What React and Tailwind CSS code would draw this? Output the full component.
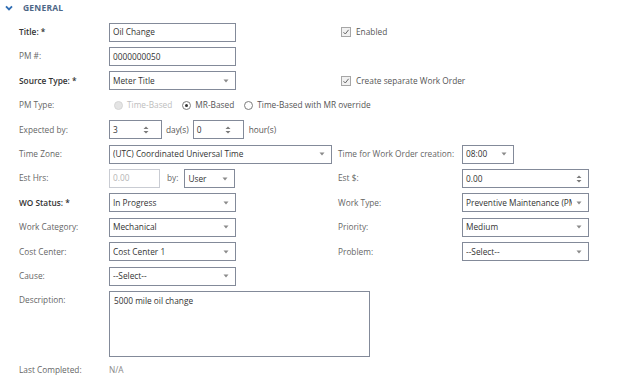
import React from 'react'

function Arrow() {
  return (
    <svg width="6" height="4" viewBox="0 0 6 4" className="shrink-0">
      <path d="M0.5 0.5h5L3 3.5z" fill="#8a8a8a" />
    </svg>
  )
}

function SpinIcon() {
  return (
    <svg width="6" height="8" viewBox="0 0 6 8" className="shrink-0">
      <path d="M3 0.5L5.5 3H0.5z M3 7.5L5.5 5H0.5z" fill="#7a7a7a" />
    </svg>
  )
}

const boxBase = 'h-[19px] border border-[#838a99] bg-white flex items-center pl-[3px] text-[#333]'

function Input({ value, className = 'w-[127px]' }) {
  return (
    <div className={`${className} ${boxBase}`}>
      <span className="whitespace-nowrap leading-[12px]">{value}</span>
    </div>
  )
}

function Select({ value, className = 'w-[127px]' }) {
  return (
    <div className={`${className} ${boxBase} pr-[6px]`}>
      <span className="flex-1 min-w-0 overflow-hidden whitespace-nowrap leading-[12px]">{value}</span>
      <span className="pl-[4px]"><Arrow /></span>
    </div>
  )
}

function Spin({ value, className = 'w-[51px]', pad = 'pr-[12px]' }) {
  return (
    <div className={`${className} ${pad} ${boxBase}`}>
      <span className="flex-1 whitespace-nowrap leading-[12px]">{value}</span>
      <SpinIcon />
    </div>
  )
}

function Checkbox({ label }) {
  return (
    <div className="flex items-center gap-[5px] pl-[3px] text-[#555]">
      <span className="w-[10px] h-[10px] border border-[#a6a6a6] bg-[#f1f1f1] flex items-center justify-center">
        <svg width="8" height="8" viewBox="0 0 8 8">
          <path d="M1.5 4.2L3.3 6L6.6 1.8" fill="none" stroke="#666" strokeWidth="1" />
        </svg>
      </span>
      <span>{label}</span>
    </div>
  )
}

function Radio({ checked, disabled }) {
  if (disabled) {
    return <span className="w-[9px] h-[9px] rounded-full bg-[#e4e4e4] border border-[#d6d6d6] shrink-0" />
  }
  return (
    <span className="w-[9px] h-[9px] rounded-full bg-white border border-[#7d7d7d] flex items-center justify-center shrink-0">
      {checked && <span className="w-[3px] h-[3px] rounded-full bg-[#333]" />}
    </span>
  )
}

function Label({ children, bold }) {
  return (
    <div className={bold ? 'font-semibold text-[#333]' : 'text-[#666]'}>{children}</div>
  )
}

function RightLabel({ children }) {
  return <div className="text-[#666] whitespace-nowrap">{children}</div>
}

const row = 'grid grid-cols-[90px_229px_124px_1fr] items-center h-[24.4px]'

export default function App() {
  return (
    <div className="w-[633px] h-[383px] bg-white overflow-hidden font-['Open_Sans',sans-serif] text-[8.3px] leading-none">
      <div className="h-[16px] mb-[4px] flex items-center pl-[5px] gap-[10px]">
        <svg width="8" height="6" viewBox="0 0 8 6">
          <path d="M1 1.3L4 4.3L7 1.3" fill="none" stroke="#2f6db3" strokeWidth="1.9" />
        </svg>
        <span className="font-bold text-[#4d6786] text-[8.5px] tracking-[0.2px]">GENERAL</span>
      </div>

      <div className="pl-[19px]">
        <div className={row}>
          <Label bold>Title: *</Label>
          <Input value="Oil Change" />
          <Checkbox label="Enabled" />
          <div />
        </div>

        <div className={row}>
          <Label>PM #:</Label>
          <Input value="0000000050" />
          <div />
          <div />
        </div>

        <div className={row}>
          <Label bold>Source Type: *</Label>
          <Select value="Meter Title" />
          <div className="col-span-2"><Checkbox label="Create separate Work Order" /></div>
        </div>

        <div className="grid grid-cols-[90px_1fr] items-center h-[24.4px]">
          <Label>PM Type:</Label>
          <div className="flex items-center pl-[5px] text-[#555]">
            <Radio disabled />
            <span className="ml-[4px] text-[#bdbdbd]">Time-Based</span>
            <span className="ml-[10px]"><Radio checked /></span>
            <span className="ml-[4px]">MR-Based</span>
            <span className="ml-[10px]"><Radio /></span>
            <span className="ml-[4px]">Time-Based with MR override</span>
          </div>
        </div>

        <div className="grid grid-cols-[90px_1fr] items-center h-[24.4px]">
          <Label>Expected by:</Label>
          <div className="flex items-center text-[#555]">
            <Spin value="3" className="w-[53px]" />
            <span className="ml-[4px] mr-[4px]">day(s)</span>
            <Spin value="0" />
            <span className="ml-[5px]">hour(s)</span>
          </div>
        </div>

        <div className={row}>
          <Label>Time Zone:</Label>
          <Select value="(UTC) Coordinated Universal Time" className="w-[223px]" />
          <RightLabel>Time for Work Order creation:</RightLabel>
          <Select value="08:00" className="w-[52px]" />
        </div>

        <div className={row}>
          <Label>Est Hrs:</Label>
          <div className="flex items-center">
            <div className="w-[51px] h-[19px] border border-[#c9ccd3] bg-white flex items-center pl-[3px] text-[#b5b5b5]">0.00</div>
            <span className="ml-[7px] mr-[6px] text-[#666]">by:</span>
            <Select value="User" className="w-[51px]" />
          </div>
          <RightLabel>Est $:</RightLabel>
          <Spin value="0.00" className="w-[127px]" pad="pr-[6px]" />
        </div>

        <div className={row}>
          <Label bold>WO Status: *</Label>
          <Select value="In Progress" />
          <RightLabel>Work Type:</RightLabel>
          <Select value="Preventive Maintenance (PM)" />
        </div>

        <div className={row}>
          <Label>Work Category:</Label>
          <Select value="Mechanical" />
          <RightLabel>Priority:</RightLabel>
          <Select value="Medium" />
        </div>

        <div className={row}>
          <Label>Cost Center:</Label>
          <Select value="Cost Center 1" />
          <RightLabel>Problem:</RightLabel>
          <Select value="--Select--" />
        </div>

        <div className={row}>
          <Label>Cause:</Label>
          <Select value="--Select--" />
          <div />
          <div />
        </div>

        <div className="grid grid-cols-[90px_1fr] items-start mt-[3px]">
          <div className="pt-[5px]"><Label>Description:</Label></div>
          <div className="w-[261px] h-[66px] border border-[#838a99] bg-white px-[4px] pt-[5px] text-[#333]">
            5000 mile oil change
          </div>
        </div>

        <div className="grid grid-cols-[90px_1fr] items-center h-6 mt-[1px]">
          <Label>Last Completed:</Label>
          <div className="text-[#888]">N/A</div>
        </div>
      </div>
    </div>
  )
}
